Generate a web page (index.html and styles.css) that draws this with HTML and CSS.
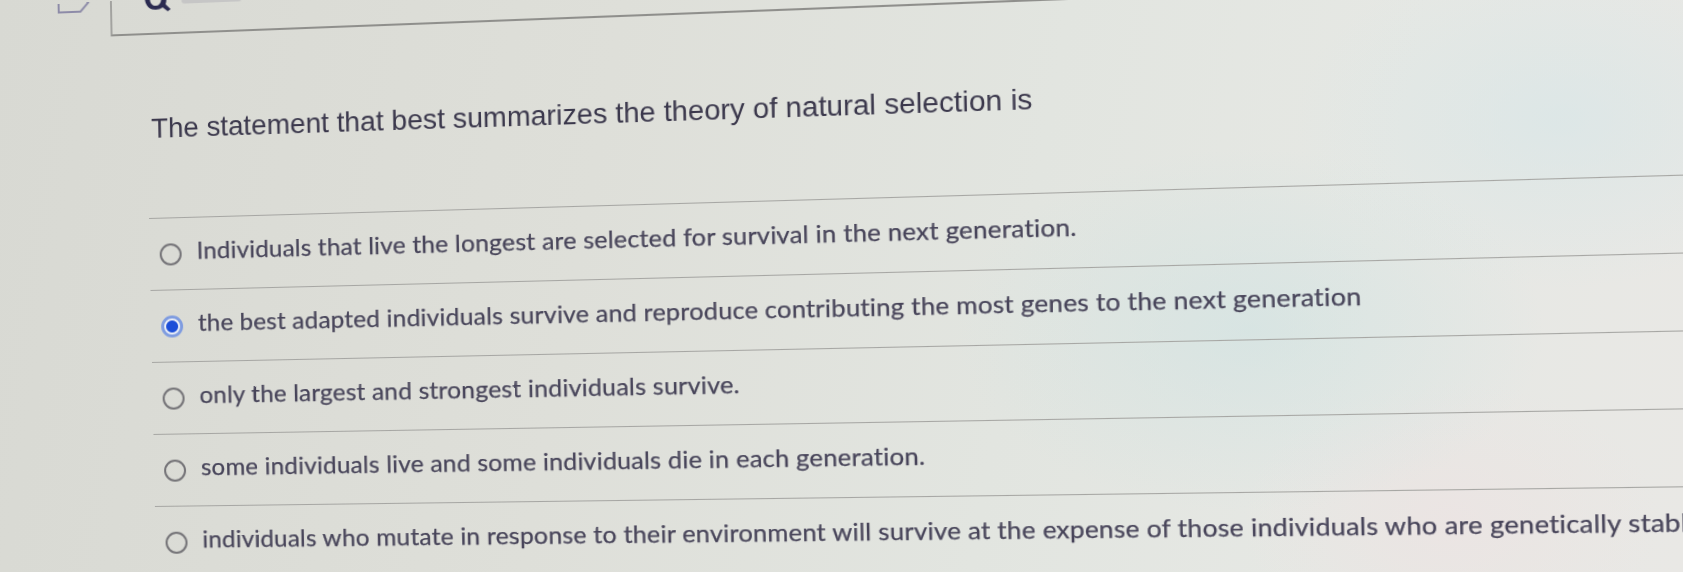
FILE: index.html
```html
<!DOCTYPE html>
<html lang="en">
<head>
<meta charset="utf-8">
<title>Natural selection question</title>
<link rel="stylesheet" href="styles.css">
</head>
<body>
<div class="screen">
  <div class="sheet">
    <header class="topbar">
      <div class="gutter">
        <svg class="flag" width="40" height="14" viewBox="0 0 40 14"><polyline points="3,-2 3,9 25,9 35,-2" fill="none" stroke="#8d8ba8" stroke-width="2"/></svg>
      </div>
      <div class="bar">
        <svg class="search" width="34" height="14" viewBox="0 0 34 14"><path d="M1,-4 C1,6 6,10 12,10 C15,10 17,9 19,8 L24,12 L27,10 L22,5 C23,2 23,-1 23,-4 Z" fill="#2a2a50"/><path d="M6,-4 C6,3 8,6 12,6 C16,6 18,3 18,-4 Z" fill="#d9dad4"/></svg>
        <span class="crumb"></span>
      </div>
    </header>
    <main class="question">
      <p class="prompt">The statement that best summarizes the theory of natural selection is</p>
      <ul class="choices">
        <li class="choice"><span class="radio"></span><span class="label">Individuals that live the longest are selected for survival in the next generation.</span></li>
        <li class="choice"><span class="radio checked"></span><span class="label">the best adapted individuals survive and reproduce contributing the most genes to the next generation</span></li>
        <li class="choice"><span class="radio"></span><span class="label">only the largest and strongest individuals survive.</span></li>
        <li class="choice"><span class="radio"></span><span class="label">some individuals live and some individuals die in each generation.</span></li>
        <li class="choice"><span class="radio"></span><span class="label">individuals who mutate in response to their environment will survive at the expense of those individuals who are genetically stable.</span></li>
      </ul>
    </main>
  </div>
</div>
</body>
</html>
```

FILE: styles.css
```css
html, body {
  margin: 0;
  padding: 0;
}

body {
  background: #dedfd9;
}

.screen {
  width: 1683px;
  height: 572px;
  overflow: hidden;
  background:
    radial-gradient(ellipse 420px 260px at 1250px 330px, rgba(205, 226, 226, 0.55), rgba(205, 226, 226, 0) 70%),
    radial-gradient(ellipse 380px 240px at 1560px 120px, rgba(214, 230, 232, 0.6), rgba(214, 230, 232, 0) 70%),
    radial-gradient(ellipse 300px 200px at 1450px 520px, rgba(238, 226, 226, 0.6), rgba(238, 226, 226, 0) 70%),
    linear-gradient(100deg, #d8d9d3 0%, #dedfd9 35%, #e2e5e0 60%, #e6e8e4 80%, #e9e8e5 100%);
}

.sheet {
  width: 1800px;
  transform-origin: 150px 363px;
  transform: perspective(2000px) rotateY(-6.1deg) rotate(-1.17deg);
}

.topbar {
  display: flex;
  height: 35px;
}

.gutter {
  width: 117px;
  flex: none;
}

.flag {
  display: block;
  margin-left: 62px;
}

.bar {
  flex: 1;
  display: flex;
  align-items: flex-start;
  gap: 4px;
  border-left: 2px solid #a3a3a0;
  border-bottom: 2px solid #8f8f8c;
  box-sizing: border-box;
  padding-left: 32px;
}

.search {
  display: block;
}

.crumb {
  display: block;
  width: 60px;
  height: 5px;
  background: #c6c6c6;
  border-radius: 0 0 3px 3px;
}

.question {
  padding-left: 152px;
}

.prompt {
  margin: 78px 0 0 4px;
  font-family: "Liberation Sans", Arial, sans-serif;
  font-size: 27.7px;
  line-height: 32px;
  color: #3b384c;
  white-space: nowrap;
}

.choices {
  list-style: none;
  margin: 73px 0 0 0;
  padding: 0;
}

.choice {
  display: flex;
  align-items: center;
  height: 72px;
  box-sizing: border-box;
  border-top: 1.5px solid #a6a6a3;
}

.radio {
  flex: none;
  width: 22px;
  height: 22px;
  box-sizing: border-box;
  margin-left: 10px;
  border: 2px solid #747377;
  border-radius: 50%;
}

.radio.checked {
  border: 3px solid #7f9ce0;
  background: radial-gradient(circle, #1c4ed8 0 5.5px, #eef1f8 6.5px);
}

.label {
  margin-left: 15px;
  margin-bottom: 7px;
  font-family: Lato, "Open Sans", sans-serif;
  font-size: 24px;
  letter-spacing: 0.2px;
  line-height: 22px;
  color: #48455a;
  -webkit-text-stroke: 0.25px #48455a;
  white-space: nowrap;
}
```
